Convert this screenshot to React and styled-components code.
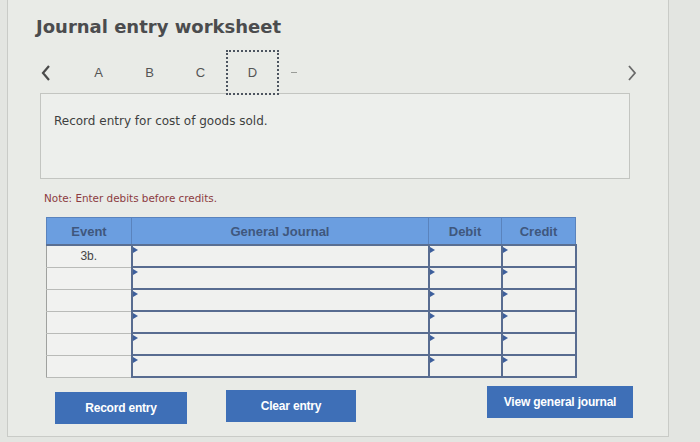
import React from "react";
import styled, { createGlobalStyle } from "styled-components";

const Global = createGlobalStyle`
  html, body { margin: 0; padding: 0; background: #e3e5e1; }
  body { width: 700px; height: 442px; overflow: hidden; font-family: "Liberation Sans", Arial, sans-serif; }
`;

const Frame = styled.div`
  margin-left: 7px;
  width: 662px;
  height: 437px;
  box-sizing: border-box;
  border-left: 1px solid #c9cbc7;
  border-right: 1px solid #c9cbc7;
  border-bottom: 1px solid #c9cbc7;
  background: #e9ebe7;
  padding: 16px 0 0 28px;
`;

const Title = styled.h1`
  margin: 0;
  font-family: "DejaVu Sans", Verdana, sans-serif;
  font-weight: bold;
  font-size: 18px;
  color: #4b4c4e;
`;

const NavRow = styled.div`
  display: flex;
  align-items: center;
  margin-top: 13px;
  height: 45px;
  width: 606px;
`;

const Arrow = styled.span`
  display: flex;
  align-items: center;
  justify-content: center;
  width: 20px;
`;

const Gap = styled.span`
  width: ${p => p.$w}px;
`;

const Tab = styled.div`
  width: ${p => (p.$active ? "53px" : "51px")};
  height: 45px;
  display: flex;
  align-items: center;
  justify-content: center;
  font-family: "Liberation Sans", Arial, sans-serif;
  font-size: 13px;
  color: #555;
  box-sizing: border-box;
  border: ${p => (p.$active ? "2px dotted #4d5560" : "2px solid transparent")};
  background: ${p => (p.$active ? "#e9ebe7" : "transparent")};
  position: relative;
  z-index: 1;
`;

const Dash = styled.span`
  width: 6px;
  height: 1px;
  background: #9a9c98;
  margin-left: 12px;
`;

const Spacer = styled.div`
  flex: 1;
`;

const Prompt = styled.div`
  margin-top: -2px;
  margin-left: 4px;
  width: 590px;
  height: 86px;
  box-sizing: border-box;
  border: 1px solid #c3c5c1;
  background: #edefec;
  padding: 20px 0 0 13px;
  font-family: "DejaVu Sans", Verdana, sans-serif;
  font-size: 12px;
  color: #3e3f40;
`;

const Note = styled.div`
  margin-top: 13px;
  margin-left: 8px;
  font-family: "DejaVu Sans", Verdana, sans-serif;
  font-size: 10.4px;
  color: #8c3b3f;
`;

const Table = styled.table`
  margin-top: 13px;
  margin-left: 10px;
  border-collapse: collapse;
  table-layout: fixed;
  width: 529px;
`;

const Th = styled.th`
  background: #6b9ee0;
  color: #3f577d;
  font-family: "Liberation Sans", Arial, sans-serif;
  font-weight: bold;
  font-size: 13px;
  height: 26px;
  padding: 0;
  text-align: center;
  border: 1px solid #5a83bd;
  border-bottom: 2px solid #5a6f92;
`;

const EventCell = styled.td`
  height: 20px;
  padding: 0;
  background: #f1f2f0;
  border: 1px solid #b9bbb8;
  border-left: 1px solid #9fa19e;
  text-align: center;
  font-family: "Liberation Sans", Arial, sans-serif;
  font-size: 12px;
  color: #444;
`;

const InputCell = styled.td`
  height: 20px;
  padding: 0;
  background: #f0f1ef;
  border: 2px solid #586c90;
  position: relative;
`;

const Flag = styled.span`
  position: absolute;
  left: 0;
  top: 1px;
  width: 0;
  height: 0;
  border-top: 3px solid transparent;
  border-bottom: 3px solid transparent;
  border-left: 5px solid #3d5f9c;
`;

const Buttons = styled.div`
  display: flex;
  align-items: flex-start;
  margin-top: 13px;
  margin-left: 19px;
  width: 578px;
`;

const Button = styled.button`
  width: ${p => p.$w}px;
  height: 32px;
  margin-left: ${p => p.$ml || 0}px;
  margin-top: ${p => p.$mt || 0}px;
  border: none;
  background: #3e6fb7;
  color: #fff;
  font-family: "Liberation Sans", Arial, sans-serif;
  font-weight: bold;
  font-size: 12px;
  letter-spacing: -0.2px;
  cursor: pointer;
`;

const rows = ["3b.", "", "", "", "", ""];

export default function App() {
  return (
    <>
      <Global />
      <Frame>
        <Title>Journal entry worksheet</Title>
        <NavRow>
          <Arrow>
            <svg width="12" height="18" viewBox="0 0 12 18">
              <path d="M9 2 L3 9 L9 16" fill="none" stroke="#4a4a4a" strokeWidth="2.2" />
            </svg>
          </Arrow>
          <Gap $w={17} />
          <Tab>A</Tab>
          <Tab>B</Tab>
          <Tab>C</Tab>
          <Tab $active>D</Tab>
          <Dash />
          <Spacer />
          <Arrow>
            <svg width="12" height="18" viewBox="0 0 12 18">
              <path d="M3 2 L9 9 L3 16" fill="none" stroke="#6a6a6a" strokeWidth="1.8" />
            </svg>
          </Arrow>
        </NavRow>
        <Prompt>Record entry for cost of goods sold.</Prompt>
        <Note>Note: Enter debits before credits.</Note>
        <Table>
          <colgroup>
            <col style={{ width: 85 }} />
            <col style={{ width: 297 }} />
            <col style={{ width: 73 }} />
            <col style={{ width: 74 }} />
          </colgroup>
          <thead>
            <tr>
              <Th>Event</Th>
              <Th>General Journal</Th>
              <Th>Debit</Th>
              <Th>Credit</Th>
            </tr>
          </thead>
          <tbody>
            {rows.map((r, i) => (
              <tr key={i}>
                <EventCell>{r}</EventCell>
                <InputCell><Flag /></InputCell>
                <InputCell><Flag /></InputCell>
                <InputCell><Flag /></InputCell>
              </tr>
            ))}
          </tbody>
        </Table>
        <Buttons>
          <Button $w={132} $mt={1}>Record entry</Button>
          <Button $w={130} $ml={39} $mt={-1}>Clear entry</Button>
          <Button $w={146} $ml={131} $mt={-5}>View general journal</Button>
        </Buttons>
      </Frame>
    </>
  );
}
